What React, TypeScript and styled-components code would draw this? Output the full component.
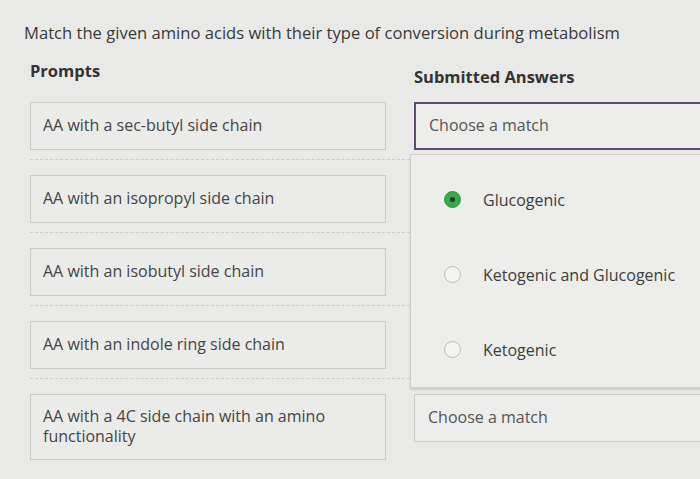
import React from "react";
import styled, { createGlobalStyle, css } from "styled-components";

const GlobalStyle = createGlobalStyle`
  html, body {
    margin: 0;
    padding: 0;
    background: #e9e9e7;
    overflow: hidden;
  }
  body {
    font-family: "Open Sans", "Noto Sans", sans-serif;
    color: #3f3f3f;
  }
`;

const Page = styled.div`
  width: 700px;
  height: 479px;
  padding: 22px 0 0 24px;
  box-sizing: border-box;
  overflow: hidden;
`;

const Question = styled.p`
  margin: 0;
  font-size: 16.6px;
  line-height: 22px;
  color: #3a3a3a;
`;

const Columns = styled.div`
  display: grid;
  grid-template-columns: 356px 320px;
  column-gap: 28px;
  margin-left: 6px;
`;

const HeaderRow = styled(Columns)`
  margin-top: 16px;
  margin-bottom: 14px;
`;

const ColumnLabel = styled.h3<{ $offset?: number }>`
  margin: 0;
  padding-top: ${({ $offset }) => $offset ?? 0}px;
  font-size: 16.5px;
  line-height: 22px;
  font-weight: 700;
  color: #333;
`;

const PairRow = styled(Columns)`
  align-items: start;
`;

const PromptBox = styled.div<{ $tall?: boolean }>`
  box-sizing: border-box;
  min-height: ${({ $tall }) => ($tall ? 66 : 48)}px;
  padding: ${({ $tall }) => ($tall ? "9px 12px 11px" : "0 12px 3px")};
  display: flex;
  align-items: center;
  background: #ebebe9;
  border: 1px solid #c9c9c7;
  font-size: 16px;
  line-height: 20px;
  color: #454545;
`;

const Separator = styled.div`
  width: 380px;
  margin: 9px 0 15px 6px;
  border-top: 1px dashed #cdcdcb;
`;

const AnswerCell = styled.div`
  position: relative;
`;

const Select = styled.div<{ $focused?: boolean }>`
  box-sizing: border-box;
  height: 48px;
  padding: 0 0 2px 13px;
  display: flex;
  align-items: center;
  background: #ededeb;
  font-size: 16px;
  color: #555;
  ${({ $focused }) =>
    $focused
      ? css`
          border: 2px solid #5e4a6c;
        `
      : css`
          border: 1px solid #c9c9c7;
        `}
`;

const Menu = styled.ul`
  position: absolute;
  z-index: 2;
  top: calc(100% + 4px);
  left: -4px;
  right: -20px;
  margin: 0;
  padding: 7px 0 0;
  list-style: none;
  background: #ededeb;
  border: 1px solid #cfcfcd;
  box-shadow: 0 2px 2px rgba(0, 0, 0, 0.12);
`;

const Option = styled.li`
  height: 75px;
  display: flex;
  align-items: center;
  gap: 22px;
  padding-left: 33px;
  font-size: 16px;
  color: #3d3d3d;
`;

const Radio = styled.span<{ $checked?: boolean }>`
  box-sizing: border-box;
  width: 17px;
  height: 17px;
  border-radius: 50%;
  display: inline-flex;
  align-items: center;
  justify-content: center;
  ${({ $checked }) =>
    $checked
      ? css`
          background: #3aa84b;
          border: 1px solid #2f9a40;
          &::after {
            content: "";
            width: 5px;
            height: 5px;
            border-radius: 50%;
            background: #1d3f22;
          }
        `
      : css`
          background: #f3f3f1;
          border: 1.5px solid #b8b8b6;
        `}
`;

const prompts = [
  "AA with a sec-butyl side chain",
  "AA with an isopropyl side chain",
  "AA with an isobutyl side chain",
  "AA with an indole ring side chain",
  "AA with a 4C side chain with an amino functionality",
];

const options = [
  { label: "Glucogenic", checked: true },
  { label: "Ketogenic and Glucogenic", checked: false },
  { label: "Ketogenic", checked: false },
];

export default function App() {
  return (
    <>
      <GlobalStyle />
      <Page>
        <Question>
          Match the given amino acids with their type of conversion during metabolism
        </Question>

        <HeaderRow>
          <ColumnLabel>Prompts</ColumnLabel>
          <ColumnLabel $offset={6}>Submitted Answers</ColumnLabel>
        </HeaderRow>

        {prompts.map((prompt, i) => {
          const last = i === prompts.length - 1;
          return (
            <React.Fragment key={prompt}>
              <PairRow>
                <PromptBox $tall={last}>
                  {last ? (
                    <span>
                      AA with a 4C side chain with an amino
                      <br />
                      functionality
                    </span>
                  ) : (
                    prompt
                  )}
                </PromptBox>
                <AnswerCell>
                  {i === 0 && (
                    <>
                      <Select $focused>Choose a match</Select>
                      <Menu>
                        {options.map((o) => (
                          <Option key={o.label}>
                            <Radio $checked={o.checked} />
                            {o.label}
                          </Option>
                        ))}
                      </Menu>
                    </>
                  )}
                  {last && <Select>Choose a match</Select>}
                </AnswerCell>
              </PairRow>
              {!last && <Separator />}
            </React.Fragment>
          );
        })}
      </Page>
    </>
  );
}
